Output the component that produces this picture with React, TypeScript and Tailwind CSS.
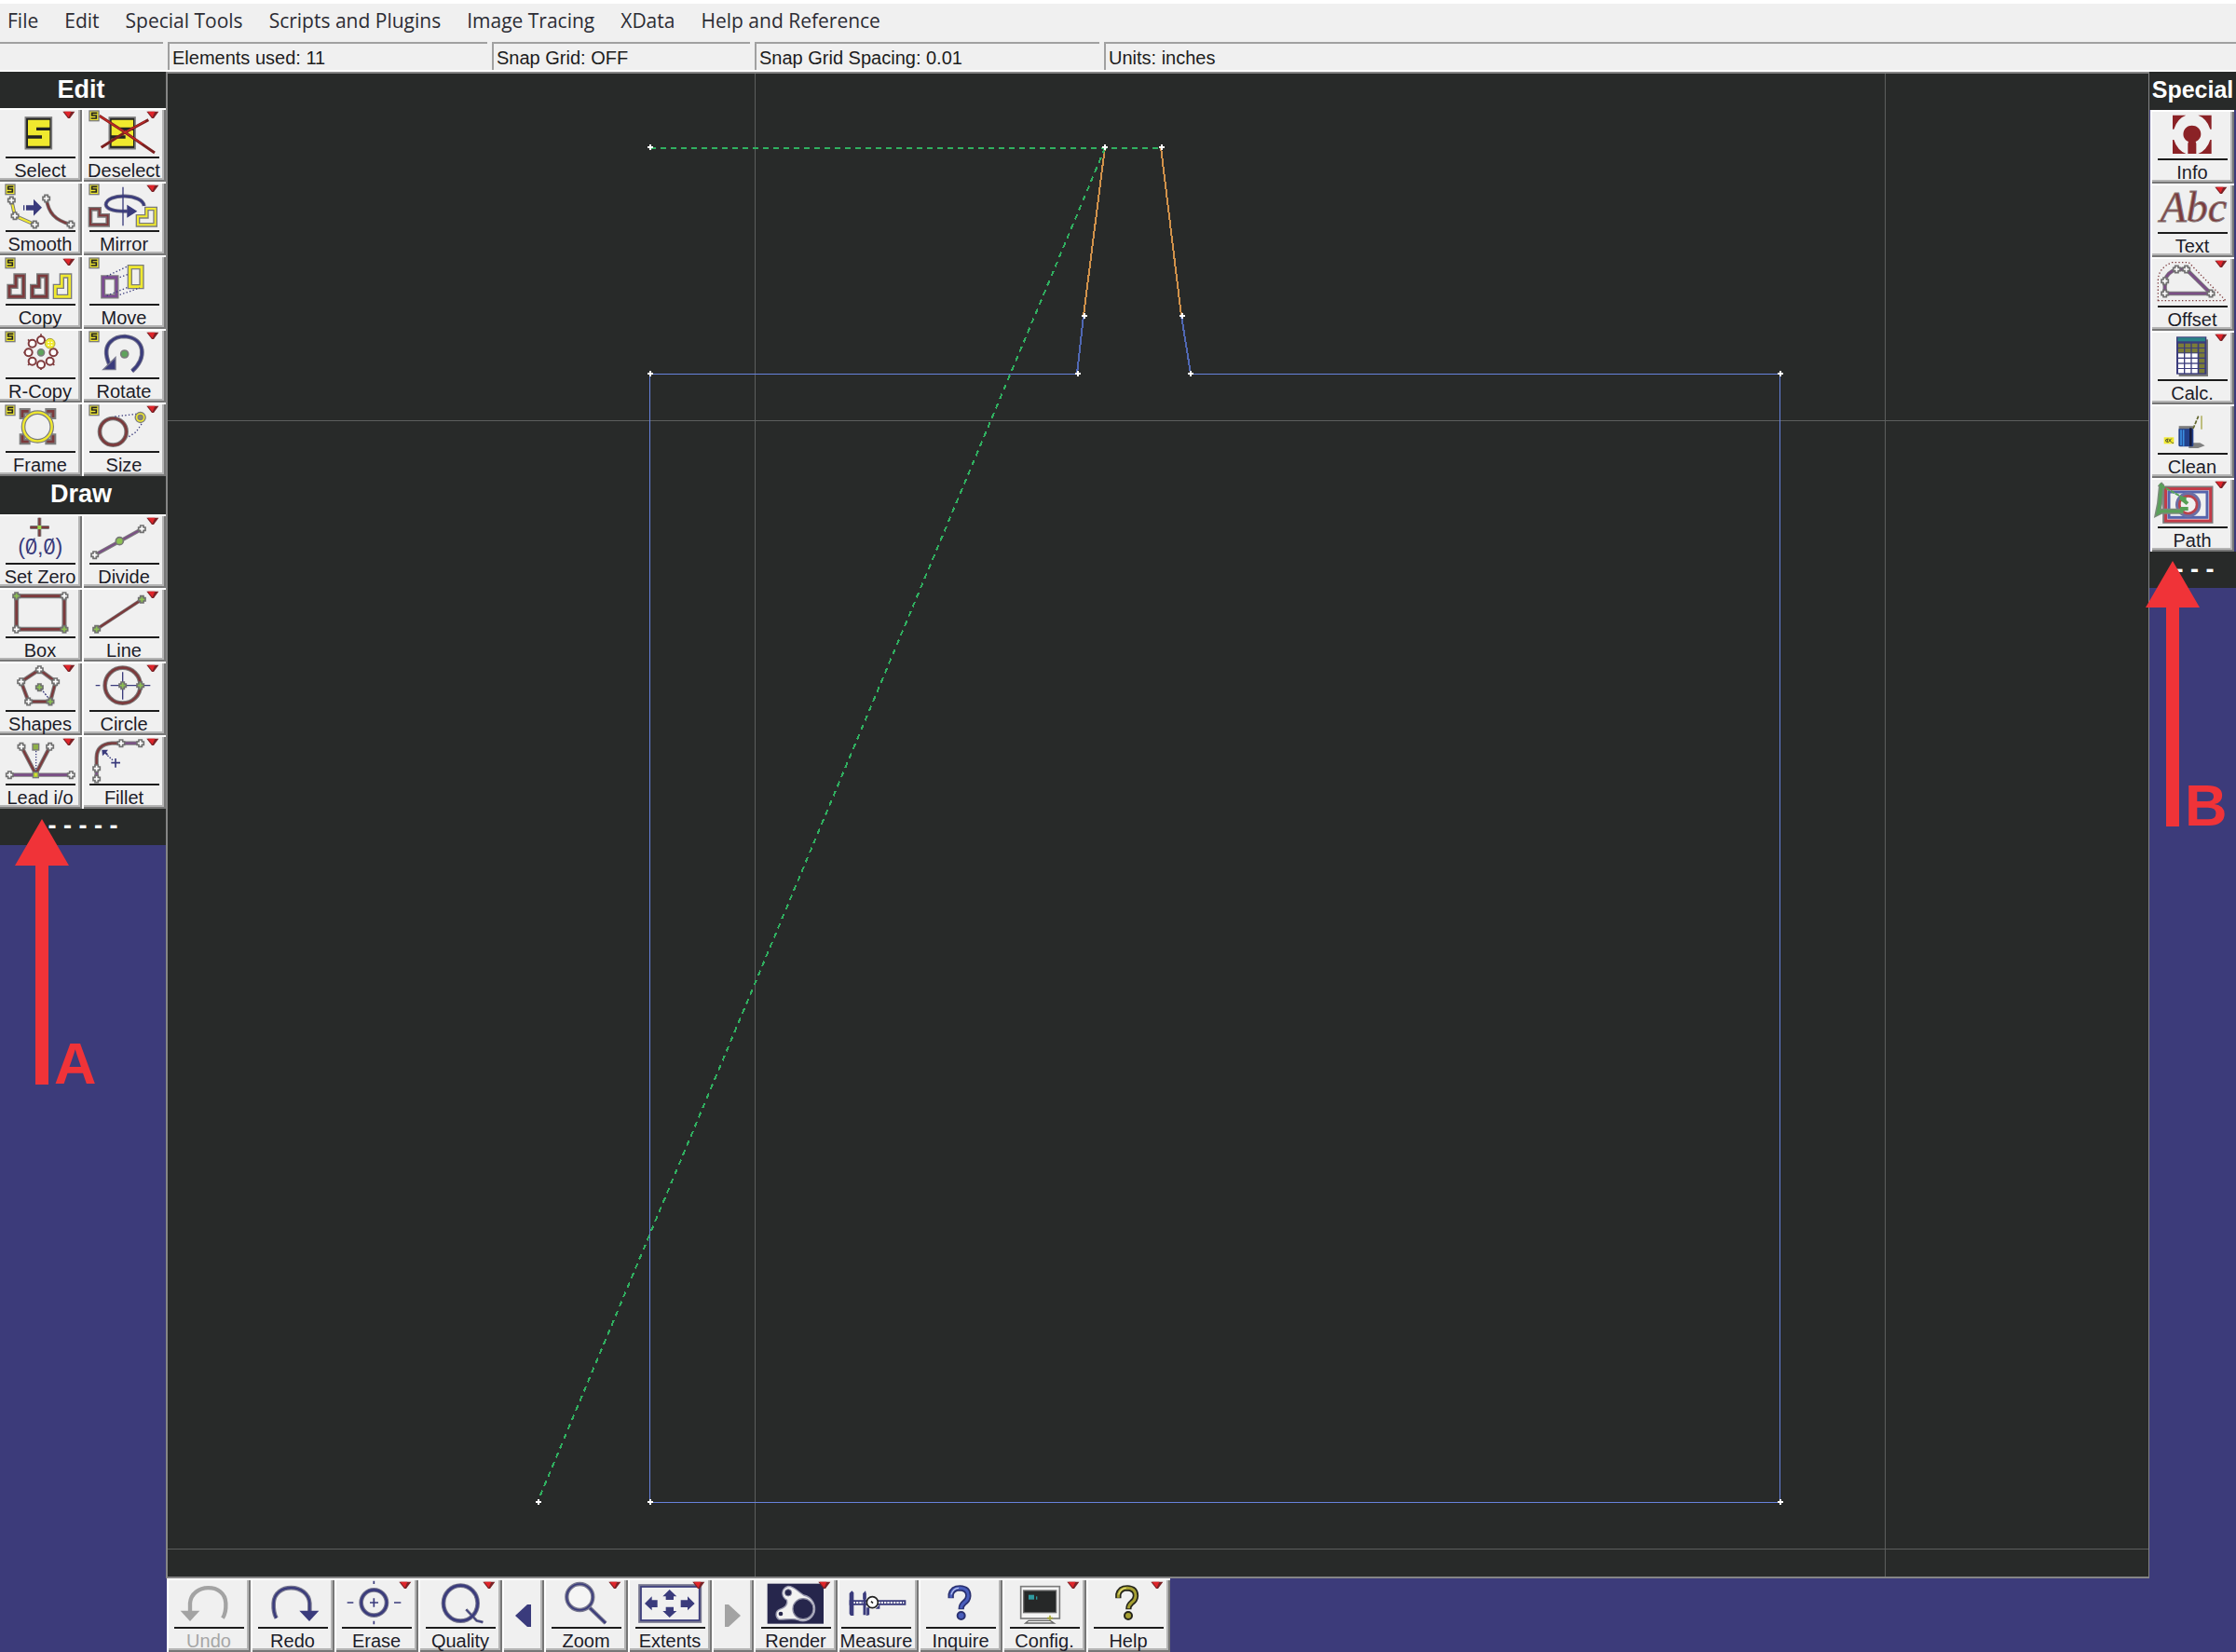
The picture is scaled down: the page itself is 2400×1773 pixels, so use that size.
import React from "react";

const GRAY = "#7c7c7c";
const MAROON = "#7c3a3c";
const NAVY = "#3a3b7c";
const YELLOW = "#f0e92e";
const GREEN = "#8cc152";
const PURPLE = "#7b4f86";

type OutlinedProps = { d: string; color: string; outer?: number; inner?: number; edge?: string };

function Outlined({ d, color, outer = 12, inner = 6, edge = GRAY }: OutlinedProps) {
  return (
    <>
      <path d={d} fill="none" stroke={edge} strokeWidth={outer} />
      <path d={d} fill="none" stroke={color} strokeWidth={inner} />
    </>
  );
}

function Node({ x, y, fill = "#ffffff" }: { x: number; y: number; fill?: string }) {
  return (
    <path
      d={`M${x - 5} ${y - 11}h10v6h6v10h-6v6h-10v-6h-6v-10h6z`}
      fill={fill}
      stroke="#707070"
      strokeWidth={5}
    />
  );
}

function Ring({ x, y }: { x: number; y: number }) {
  return <circle cx={x} cy={y} r={12} fill="#ffffff" stroke="#813c3e" strokeWidth={6} />;
}

const icons: Record<string, { box: string; art: React.ReactNode }> = {
  select: {
    box: "-6 125 270 156",
    art: (
      <>
        <rect x={82} y={155} width={84} height={101} fill="#222222" stroke={GRAY} strokeWidth={5} />
        <path d="M90 163H160V187H117V197H160V247H90V223H135V213H90Z" fill={YELLOW} />
      </>
    ),
  },
  deselect: {
    box: "266 125 270 156",
    art: (
      <>
        <rect x={354} y={155} width={83} height={101} fill="#222222" stroke={GRAY} strokeWidth={5} />
        <path d="M361 163H431V187H388V197H431V247H361V223H406V213H361Z" fill={YELLOW} />
        <path d="M322 150L400 200L500 269M480 163L400 206L328 252" stroke="#7c2020" strokeWidth={9} fill="none" />
        <path d="M322 150L400 200L460 240M470 167L400 206" stroke="#c62a26" strokeWidth={4} fill="none" />
      </>
    ),
  },
  smooth: {
    box: "-6 360 270 156",
    art: (
      <>
        <Outlined d="M37 420L48 470L112 498" color={YELLOW} outer={12} inner={6} />
        <Node x={37} y={420} />
        <Node x={48} y={470} />
        <Node x={112} y={498} />
        <path d="M75 436h4v16h-4zM84 436h24v-20l27 27-27 27v-18H84z" fill={NAVY} />
        <Outlined d="M149 414C156 460 176 484 228 498" color={MAROON} outer={12} inner={7} />
        <Node x={149} y={414} />
        <Node x={228} y={498} />
      </>
    ),
  },
  mirror: {
    box: "266 360 270 156",
    art: (
      <>
        <Outlined d="M293 448H322V469H349V499H293Z" color={MAROON} outer={14} inner={6} />
        <Outlined d="M502 447H474V472H446V499H502Z" color={YELLOW} outer={14} inner={6} />
        <path d="M466 438C462 398 345 396 343 434C345 448 370 456 412 455" fill="none" stroke="#6f6f8a" strokeWidth={12} />
        <path d="M466 438C462 398 345 396 343 434C345 448 370 456 412 455" fill="none" stroke={NAVY} strokeWidth={7} />
        <path d="M398 377V502" stroke={NAVY} strokeWidth={4} />
        <path d="M411 434L444 455L411 476Z" fill={NAVY} />
      </>
    ),
  },
  copy: {
    box: "-6 597 270 156",
    art: (
      <>
        <Outlined d="M30 697H51V663H76V730H30Z" color={MAROON} outer={16} inner={8} />
        <Outlined d="M104 697H125V663H150V730H104Z" color={MAROON} outer={16} inner={8} />
        <Outlined d="M178 697H199V663H224V730H178Z" color={YELLOW} outer={16} inner={8} />
      </>
    ),
  },
  move: {
    box: "266 597 270 156",
    art: (
      <>
        <Outlined d="M334 668H377V729H334Z" color="#7d4b92" outer={15} inner={8} />
        <Outlined d="M420 635H458V698H420Z" color={YELLOW} outer={16} inner={8} />
        <path d="M346 664L414 632M388 668L414 658M346 727L414 700M388 724L452 702" stroke={NAVY} strokeWidth={4} strokeDasharray="4 7" />
      </>
    ),
  },
  rcopy: {
    box: "-6 130 270 156",
    art: (
      <>
        <path d="M132 146v8M84 206h-8M188 206h-8M132 262v-8M90 164l6 6M90 247l6-6M175 247l-6-6" stroke={MAROON} strokeWidth={5} />
        <Ring x={132} y={166} />
        <Ring x={104} y={177} />
        <Ring x={92} y={206} />
        <Ring x={104} y={234} />
        <Ring x={132} y={245} />
        <Ring x={161} y={234} />
        <Ring x={172} y={206} />
        <circle cx={161} cy={177} r={16} fill={YELLOW} stroke="#a8a23c" strokeWidth={3} />
        <path d="M154 171h5v4h-5zM164 171h5v4h-5zM154 180h5v4h-5zM164 180h5v4h-5z" fill="#ffffff" />
        <circle cx={132} cy={206} r={11} fill="#5fa35c" stroke={GRAY} strokeWidth={4} />
      </>
    ),
  },
  rotate: {
    box: "266 130 270 156",
    art: (
      <>
        <path d="M354 244C322 170 380 154 404 154C470 160 476 226 427 266" fill="none" stroke="#74748c" strokeWidth={14} />
        <path d="M354 244C322 170 380 154 404 154C470 160 476 226 427 266" fill="none" stroke={NAVY} strokeWidth={8} />
        <path d="M334 261L374 222V261Z" fill={NAVY} stroke="#74748c" strokeWidth={4} />
        <circle cx={403} cy={211} r={12} fill="#5fa35c" stroke={GRAY} strokeWidth={5} />
      </>
    ),
  },
  frame: {
    box: "-6 365 270 156",
    art: (
      <>
        <path d="M65 386h30v14H79v16H65zM178 386h-30v14h16v16h14zM65 498h30v-14H79v-16H65zM178 498h-30v-14h16v-16h14z" fill={MAROON} stroke={GRAY} strokeWidth={6} />
        <circle cx={121} cy={443} r={46} fill="#f0f0f0" stroke={GRAY} strokeWidth={14} />
        <circle cx={121} cy={443} r={46} fill="none" stroke={YELLOW} strokeWidth={7} />
      </>
    ),
  },
  size: {
    box: "266 365 270 156",
    art: (
      <>
        <circle cx={366} cy={459} r={43} fill="none" stroke={GRAY} strokeWidth={14} />
        <circle cx={366} cy={459} r={43} fill="none" stroke={MAROON} strokeWidth={8} />
        <path d="M372 410L442 402M458 434L440 460L412 478" fill="none" stroke={NAVY} strokeWidth={4} strokeDasharray="4 7" />
        <circle cx={454} cy={413} r={12} fill="#8a8a70" stroke={GRAY} strokeWidth={13} />
        <circle cx={454} cy={413} r={12} fill="none" stroke={YELLOW} strokeWidth={5} />
      </>
    ),
  },
  zero: {
    box: "-6 23 270 156",
    art: (
      <>
        <Outlined d="M97 65H158M127 34V94" color={MAROON} outer={12} inner={6} />
        <path d="M121 59h12v12h-12z" fill="#9bd84a" />
        <text x={130} y={151} textAnchor="middle" fontSize={70} fontFamily="Liberation Sans, sans-serif" fill={NAVY}>
          (0,0)
        </text>
        <path d="M88 148L112 100M148 148L172 100" stroke={NAVY} strokeWidth={4} />
      </>
    ),
  },
  divide: {
    box: "266 23 270 156",
    art: (
      <>
        <Outlined d="M307 154L459 70" color={PURPLE} />
        <Node x={307} y={154} />
        <Node x={459} y={70} />
        <circle cx={387} cy={109} r={12} fill={GREEN} stroke="#777777" strokeWidth={5} />
      </>
    ),
  },
  box: {
    box: "-6 258 270 156",
    art: (
      <>
        <Outlined d="M53 284H207V391H53Z" color={MAROON} outer={15} inner={8} />
        <Node x={53} y={284} fill={GREEN} />
        <Node x={207} y={284} />
        <Node x={53} y={391} />
        <Node x={207} y={391} fill={GREEN} />
      </>
    ),
  },
  line: {
    box: "266 258 270 156",
    art: (
      <>
        <Outlined d="M313 391L459 295" color={MAROON} outer={11} inner={7} />
        <Node x={313} y={391} fill={GREEN} />
        <Node x={459} y={295} fill={GREEN} />
      </>
    ),
  },
  shapes: {
    box: "-6 494 270 156",
    art: (
      <>
        <Outlined d="M127 520L179 559L162 623H92L68 559Z" color={MAROON} outer={13} inner={7} />
        <Node x={127} y={520} />
        <Node x={179} y={559} />
        <Node x={92} y={623} />
        <Node x={68} y={559} />
        <path d="M132 582L160 616" stroke={NAVY} strokeWidth={4} strokeDasharray="6 4" />
        <Node x={162} y={623} fill={GREEN} />
        <Node x={127} y={577} fill={GREEN} />
      </>
    ),
  },
  circle: {
    box: "266 494 270 156",
    art: (
      <>
        <circle cx={397} cy={571} r={57} fill="none" stroke={GRAY} strokeWidth={14} />
        <circle cx={397} cy={571} r={57} fill="none" stroke={MAROON} strokeWidth={8} />
        <path d="M310 571h14M358 571h28M410 571h34M466 571h20M397 528v32M397 584v32" stroke={NAVY} strokeWidth={4} />
        <Node x={397} y={571} fill={GREEN} />
        <Node x={454} y={571} fill={GREEN} />
      </>
    ),
  },
  lead: {
    box: "-6 25 270 156",
    art: (
      <>
        <Outlined d="M69 62L115 150L161 62" color={MAROON} outer={13} inner={7} />
        <Outlined d="M31 153H229" color={PURPLE} outer={13} inner={8} />
        <path d="M116 76V146" stroke={NAVY} strokeWidth={4} strokeDasharray="4 5" />
        <Node x={69} y={62} />
        <Node x={161} y={62} />
        <Node x={31} y={153} />
        <Node x={229} y={153} />
        <rect x={105} y={53} width={20} height={20} fill="#8fb048" stroke="#777777" strokeWidth={4} />
        <rect x={106} y={144} width={18} height={18} fill="#a8c83c" stroke="#777777" strokeWidth={4} />
        <path d="M113 148h5v8h-5z" fill={YELLOW} />
      </>
    ),
  },
  fillet: {
    box: "266 25 270 156",
    art: (
      <>
        <Outlined d="M392 51H362Q313 55 313 98V132" color={MAROON} outer={13} inner={7} />
        <Outlined d="M392 51H454M313 132V166" color={PURPLE} outer={13} inner={7} />
        <Node x={392} y={51} />
        <Node x={454} y={51} />
        <Node x={313} y={132} />
        <Node x={313} y={166} />
        <path d="M330 72h20l-6 8 6 6-4 4-6-6-8 8z" fill={NAVY} />
        <path d="M348 90L368 108" stroke={NAVY} strokeWidth={4} strokeDasharray="5 4" />
        <path d="M360 114H389M374 100V129" stroke={NAVY} strokeWidth={5} />
      </>
    ),
  },
  info: {
    box: "54 175 270 156",
    art: (
      <>
        <path d="M126 192h43q-12 4-23 16t-16 29h-4zM251 192h-43q12 4 23 16t16 29h4zM126 316h43q-12-4-23-16t-16-29h-4zM251 316h-43q12-4 23-16t16-29h4z" fill="#8b2226" />
        <path d="M175 316V283L177 277C150 266 158 225 188 225C220 225 228 266 200 277L202 283V316Z" fill="#8b2226" />
      </>
    ),
  },
  text: {
    box: "54 411 270 156",
    art: (
      <text x={86} y={535} fontSize={138} fontStyle="italic" fontFamily="Liberation Serif, serif" fill={MAROON} stroke="#8a7a7a" strokeWidth={3}>
        Abc
      </text>
    ),
  },
  offset: {
    box: "54 647 270 156",
    art: (
      <>
        <path d="M79 787H297L178 664H124Q79 682 79 724Z" fill="none" stroke={MAROON} strokeWidth={4} strokeDasharray="4 7" />
        <Outlined d="M101 764V724Q106 696 139 686H170L249 764Z" color={PURPLE} outer={13} inner={8} />
        <Node x={101} y={764} />
        <Node x={101} y={724} />
        <Node x={139} y={686} />
        <Node x={170} y={686} />
        <Node x={249} y={764} />
      </>
    ),
  },
  calc: {
    box: "54 14 270 156",
    art: (
      <>
        <rect x={146} y={42} width={94} height={119} fill="#777777" />
        <rect x={138} y={33} width={97} height={121} fill={NAVY} />
        <rect x={142} y={36} width={89} height={12} fill="#2a8287" />
        {[55, 71, 87, 104, 121, 137].map((y, row) =>
          [144, 166, 188, 211].map((x, col) => (
            <rect key={`${x}-${y}`} x={x} y={y} width={18} height={13} fill={row < 2 || col === 3 ? "#7b7d38" : "#ffffff"} />
          )),
        )}
      </>
    ),
  },
  clean: {
    box: "54 250 270 156",
    art: (
      <>
        <path d="M178 374H214L230 383L208 391H178Z" fill="#808080" />
        <rect x={145} y={326} width={48} height={60} rx={5} fill="#22418c" />
        <path d="M153 332V382M161 332V384" stroke="#3b8fe0" strokeWidth={5} />
        <path d="M146 324h46" stroke={GRAY} strokeWidth={9} />
        <path d="M184 326V384" stroke="#151a3c" strokeWidth={8} />
        <path d="M192 328L209 288" stroke="#62662c" strokeWidth={5} strokeDasharray="12 4" />
        <path d="M219 287V330" stroke="#a5a545" strokeWidth={4} />
        <rect x={98} y={356} width={32} height={21} fill={YELLOW} />
        <path d="M102 366l7-5v11zM112 360l10 12M122 360l-10 12M124 374h5" stroke="#555533" strokeWidth={3} fill="none" />
      </>
    ),
  },
  path: {
    box: "54 487 270 156",
    art: (
      <>
        <rect x={99} y={518} width={152} height={110} fill="#f0f0f0" stroke={GRAY} strokeWidth={11} />
        <rect x={104} y={522} width={144} height={103} fill="none" stroke="#c43b48" strokeWidth={9} />
        <rect x={114} y={532} width={123} height={82} fill="none" stroke="#5564ac" strokeWidth={9} />
        <circle cx={176} cy={573} r={35} fill="none" stroke="#6b6fa5" strokeWidth={12} />
        <circle cx={176} cy={573} r={28} fill="#f0f0f0" stroke="#b9434c" strokeWidth={8} />
        <path d="M84 506L90 512L84 570L78 600L90 594H160" fill="none" stroke="#7a8a7a" strokeWidth={18} />
        <path d="M84 506L90 512L84 570L78 600L90 594H160" fill="none" stroke="#5aa05a" strokeWidth={9} />
        <path d="M90 512L162 552" stroke="#57a557" strokeWidth={6} strokeDasharray="14 3" />
        <path d="M148 548h22v10l8 8-8 8-22-18zM150 580h26v12h-26z" fill="#55a055" />
      </>
    ),
  },
  undo: {
    box: "26 70 270 156",
    art: (
      <>
        <path d="M101 180V150C105 86 214 82 216 150C217 170 214 186 206 198" fill="none" stroke="#a3a3a3" strokeWidth={13} />
        <path d="M70 174H132L101 208Z" fill="#a3a3a3" />
      </>
    ),
  },
  redo: {
    box: "296 70 270 156",
    art: (
      <>
        <path d="M486 180V150C482 86 372 82 370 150C369 170 372 186 379 198" fill="none" stroke="#77778f" strokeWidth={14} />
        <path d="M486 180V150C482 86 372 82 370 150C369 170 372 186 379 198" fill="none" stroke={NAVY} strokeWidth={7} />
        <path d="M453 174H516L485 208Z" fill={NAVY} />
      </>
    ),
  },
  erase: {
    box: "566 70 270 156",
    art: (
      <>
        <circle cx={693} cy={148} r={41} fill="none" stroke="#77778f" strokeWidth={14} />
        <circle cx={693} cy={148} r={41} fill="none" stroke={NAVY} strokeWidth={8} />
        <path d="M607 148h20M758 148h22M693 78v10M693 207v11M680 148h27M693 134v28" stroke={NAVY} strokeWidth={5} />
      </>
    ),
  },
  quality: {
    box: "836 70 270 156",
    art: (
      <>
        <path d="M990 170L1024 206L1044 211" fill="none" stroke="#77778f" strokeWidth={9} />
        <ellipse cx={972} cy={150} rx={55} ry={57} fill="none" stroke="#77778f" strokeWidth={14} />
        <ellipse cx={972} cy={150} rx={55} ry={57} fill="none" stroke={NAVY} strokeWidth={8} />
        <path d="M990 170L1024 206L1044 211" fill="none" stroke={NAVY} strokeWidth={4} />
      </>
    ),
  },
  zoom: {
    box: "12 70 270 156",
    art: (
      <>
        <path d="M156 162L210 214" stroke="#77778f" strokeWidth={13} />
        <path d="M156 162L210 214" stroke={NAVY} strokeWidth={6} />
        <circle cx={127} cy={130} r={42} fill="#f5f5f5" stroke="#77778f" strokeWidth={13} />
        <circle cx={127} cy={130} r={42} fill="none" stroke={NAVY} strokeWidth={5} />
      </>
    ),
  },
  extents: {
    box: "283 70 270 156",
    art: (
      <>
        <rect x={321} y={93} width={195} height={116} fill="#f0f0f0" stroke="#77778f" strokeWidth={9} />
        <rect x={325} y={97} width={188} height={108} fill="none" stroke={NAVY} strokeWidth={5} />
        <path d="M337 151L360 128V140H378V163H360V173ZM498 151L475 128V140H453V163H475V173ZM417 106L440 128H430V139H405V128H395ZM417 196L440 175H430V162H405V175H395Z" fill={NAVY} />
      </>
    ),
  },
  render: {
    box: "689 70 270 156",
    art: (
      <>
        <rect x={733} y={87} width={181} height={129} fill="#26264c" />
        <path d="M800 95C820 95 828 112 850 124C880 130 890 160 884 180C874 206 850 212 832 204C814 196 790 204 770 202C758 194 758 176 772 170C790 164 800 156 796 140C778 130 774 104 800 95Z" fill="#f2f2f2" stroke="#9a9ab0" strokeWidth={4} />
        <circle cx={848} cy={168} r={33} fill="#26264c" stroke="#8a8aa0" strokeWidth={4} />
        <circle cx={800} cy={116} r={11} fill="#26264c" stroke="#8a8aa0" strokeWidth={3} />
        <circle cx={776} cy={184} r={7} fill="#26264c" />
      </>
    ),
  },
  measure: {
    box: "17 70 270 156",
    art: (
      <>
        <path d="M64 140H246V156H64Z" fill={NAVY} />
        <path d="M76 148H240" stroke="#f0f0f0" strokeWidth={6} strokeDasharray="7 3" />
        <path d="M64 118l8-8 6 6v74h-10l-4-6zM108 118l8-8 2 8v72h6l-2-4 4-14v16h-8V136h-10z" fill={NAVY} />
        <path d="M113 118V188M124 164V188" stroke={NAVY} strokeWidth={9} />
        <path d="M148 168h14v-14" fill={NAVY} />
        <circle cx={138} cy={147} r={18} fill="#ffffff" stroke="#222222" strokeWidth={5} />
        <path d="M134 144l6 6" stroke="#222222" strokeWidth={5} />
      </>
    ),
  },
  inquire: {
    box: "287 70 270 156",
    art: (
      <>
        <path d="M391 134V122Q396 101 420 101Q447 102 447 126Q446 140 434 148Q424 156 424 170" fill="none" stroke="#2a3170" strokeWidth={19} />
        <path d="M391 132V122Q396 101 420 101Q447 102 447 126Q446 140 434 148Q424 156 424 167" fill="none" stroke="#4a5ebc" strokeWidth={9} />
        <path d="M392 122Q398 102 416 101" fill="none" stroke="#b9c4f0" strokeWidth={4} />
        <circle cx={424} cy={190} r={12} fill="#4a5ebc" stroke="#2a3170" strokeWidth={6} />
      </>
    ),
  },
  config: {
    box: "558 70 270 156",
    art: (
      <>
        <path d="M642 206H712L724 214H632Z" fill="#f5f5f5" stroke="#666666" strokeWidth={4} />
        <rect x={617} y={96} width={125} height={103} fill="#f5f5f5" stroke={GRAY} strokeWidth={5} />
        <rect x={626} y={109} width={105} height={71} fill="#262828" stroke="#6d6d6d" strokeWidth={4} />
        <rect x={642} y={123} width={18} height={15} fill="#2f9aa0" />
        <rect x={666} y={128} width={4} height={10} fill="#2f9aa0" />
        <path d="M702 198H720M711 189V205" stroke="#a8a83c" strokeWidth={5} />
      </>
    ),
  },
  help: {
    box: "829 70 270 156",
    art: (
      <>
        <path d="M932 134V122Q937 101 961 101Q988 102 988 126Q987 140 975 148Q965 156 965 170" fill="none" stroke="#26261c" strokeWidth={19} />
        <path d="M932 132V122Q937 101 961 101Q988 102 988 126Q987 140 975 148Q965 156 965 167" fill="none" stroke="#a6a032" strokeWidth={9} />
        <path d="M933 122Q939 102 957 101" fill="none" stroke="#e8e27a" strokeWidth={4} />
        <circle cx={964} cy={190} r={12} fill="#a6a032" stroke="#26261c" strokeWidth={6} />
      </>
    ),
  },
};

type Tool = { icon: string; label: string; menu?: boolean; badge?: boolean; disabled?: boolean; narrow?: boolean };

const editTools: Tool[] = [
  { icon: "select", label: "Select", menu: true },
  { icon: "deselect", label: "Deselect", menu: true, badge: true },
  { icon: "smooth", label: "Smooth", badge: true },
  { icon: "mirror", label: "Mirror", menu: true, badge: true },
  { icon: "copy", label: "Copy", menu: true, badge: true },
  { icon: "move", label: "Move", badge: true },
  { icon: "rcopy", label: "R-Copy", badge: true },
  { icon: "rotate", label: "Rotate", menu: true, badge: true },
  { icon: "frame", label: "Frame", badge: true },
  { icon: "size", label: "Size", menu: true, badge: true },
];

const drawTools: Tool[] = [
  { icon: "zero", label: "Set Zero" },
  { icon: "divide", label: "Divide", menu: true },
  { icon: "box", label: "Box" },
  { icon: "line", label: "Line", menu: true },
  { icon: "shapes", label: "Shapes", menu: true },
  { icon: "circle", label: "Circle", menu: true },
  { icon: "lead", label: "Lead i/o", menu: true },
  { icon: "fillet", label: "Fillet", menu: true },
];

const specialTools: Tool[] = [
  { icon: "info", label: "Info" },
  { icon: "text", label: "Text", menu: true },
  { icon: "offset", label: "Offset", menu: true },
  { icon: "calc", label: "Calc.", menu: true },
  { icon: "clean", label: "Clean" },
  { icon: "path", label: "Path", menu: true },
];

const historyTools: Tool[] = [
  { icon: "undo", label: "Undo", disabled: true },
  { icon: "redo", label: "Redo" },
  { icon: "erase", label: "Erase", menu: true },
  { icon: "quality", label: "Quality", menu: true },
];

const viewTools: Tool[] = [
  { icon: "zoom", label: "Zoom", menu: true },
  { icon: "extents", label: "Extents", menu: true },
];

const otherTools: Tool[] = [
  { icon: "render", label: "Render", menu: true },
  { icon: "measure", label: "Measure", narrow: true },
  { icon: "inquire", label: "Inquire" },
  { icon: "config", label: "Config.", menu: true },
  { icon: "help", label: "Help", menu: true },
];

const bevel =
  "bg-[#f0f0f0] shadow-[inset_2px_2px_0_#ffffff,inset_-2px_-2px_0_#777777,inset_-4px_-4px_0_#b4b4b4]";

function ToolButton({ tool }: { tool: Tool }) {
  const { box, art } = icons[tool.icon];
  return (
    <button
      type="button"
      disabled={tool.disabled}
      className={`flex h-[79px] shrink-0 flex-col items-center overflow-hidden ${tool.narrow ? "w-[87px] pr-1" : "w-[90px]"} ${bevel}`}
    >
      <svg className="h-[52px] w-[90px] shrink-0" viewBox={box} aria-hidden="true">
        {art}
        <svg x={box.split(" ")[0]} y={box.split(" ")[1]} width={270} height={156} viewBox="0 0 270 156">
          {tool.badge && (
            <>
              <rect x={24} y={9} width={30} height={32} fill={YELLOW} stroke={GRAY} strokeWidth={4} />
              <path d="M49 16H32V24H46V33H29" fill="none" stroke="#222222" strokeWidth={5} />
            </>
          )}
          {tool.menu && (
            <>
              <path d="M208 11H247L231 33H225Z" fill="#7b2226" />
              <path d="M212 11H235L227 30Z" fill="#e0242a" />
            </>
          )}
        </svg>
      </svg>
      <span className="h-[2px] w-[75px] shrink-0 bg-[#1c1c1c]" />
      <span
        className={`text-[20px] leading-[26px] whitespace-nowrap ${tool.disabled ? "text-[#a6a6a6]" : "text-[#1c1c28]"}`}
      >
        {tool.label}
      </span>
    </button>
  );
}

function PageButton({ label, next }: { label: string; next?: boolean }) {
  return (
    <button
      type="button"
      aria-label={label}
      disabled={next}
      className={`flex h-[79px] w-[45px] shrink-0 items-center justify-center ${bevel}`}
    >
      <svg className="h-[24px] w-[17px]" viewBox="0 0 17 24" aria-hidden="true">
        {next ? <path d="M0 0H4L17 12L4 24H0Z" fill="#a3a3a3" /> : <path d="M17 0H13L0 12L13 24H17Z" fill={NAVY} />}
      </svg>
    </button>
  );
}

function Callout({ letter, className }: { letter: string; className: string }) {
  return (
    <div className={`pointer-events-none absolute flex items-end text-[#f03338] ${className}`}>
      <svg className="h-[285px] w-[58px] shrink-0" viewBox="0 0 58 285" aria-hidden="true">
        <path d="M29 0L58 50H36V285H22V50H0Z" fill="currentColor" />
      </svg>
      <span className="-mb-[9px] -ml-4 text-[63px] leading-[63px] font-bold">{letter}</span>
    </div>
  );
}

const points = [
  [697, 158],
  [1185, 158],
  [1246, 158],
  [1163, 339],
  [1268, 339],
  [1156, 401],
  [1277, 401],
  [697, 401],
  [1910, 401],
  [697, 1612],
  [1910, 1612],
  [577, 1612],
];

function Drawing() {
  return (
    <svg className="min-w-0 flex-1" shapeRendering="crispEdges" role="img" aria-label="Drawing">
      <g transform="translate(-180 -79)" fill="none">
        <path d="M180 451.5H4000M180 1662.5H4000M810.5 79V4000M2023.5 79V4000" stroke="#5c5e5d" />
        <path d="M1156 401.5H697.5V1612.5H1910.5V401.5H1278" stroke="#6682dc" />
        <path d="M1163 339L1156 401M1268 339L1278 401" stroke="#5068b4" strokeWidth={2} />
        <path d="M1186 158L1163 339M1246 158L1268 339" stroke="#d2924a" strokeWidth={2} />
        <path d="M698 159H1246M1186 159L577 1612" stroke="#30b060" strokeWidth={2} strokeDasharray="6 5" />
        {points.map(([x, y]) => (
          <path key={`${x}-${y}`} d={`M${x - 2} ${y}h6M${x + 1} ${y - 3}v6`} stroke="#ffffff" strokeWidth={2} />
        ))}
      </g>
    </svg>
  );
}

const menus = ["File", "Edit", "Special Tools", "Scripts and Plugins", "Image Tracing", "XData", "Help and Reference"];

const cell = "h-[30px] border-t-2 border-l-2 border-[#a0a0a0] pl-[3px] whitespace-nowrap";

export default function App() {
  return (
    <div className="flex min-h-screen flex-col bg-[#3c3b7a] font-['Liberation_Sans',Arial,sans-serif]">
      <header className="bg-[#f0f0f0]">
        <nav className="flex h-[45px] items-start border-t-4 border-white pt-[3px] font-['Open_Sans','Noto_Sans',sans-serif] text-[21px] leading-[30px] text-[#2c2c34]">
          {menus.map((m) => (
            <button key={m} type="button" className="px-[14px] first:pl-2">
              {m}
            </button>
          ))}
        </nav>
        <div className="flex h-[32px] gap-[5px] border-b-2 border-white text-[20px] leading-[30px] text-[#1c1c1c]">
          <div className="h-[30px] w-[175px] border-t-2 border-[#a0a0a0]" />
          <div className={`w-[343px] ${cell}`}>Elements used: 11</div>
          <div className={`w-[277px] ${cell}`}>Snap Grid: OFF</div>
          <div className={`w-[370px] ${cell}`}>Snap Grid Spacing: 0.01</div>
          <div className={`flex-1 ${cell}`}>Units: inches</div>
        </div>
      </header>

      <div className="flex flex-1">
        <aside className="relative w-[178px] shrink-0">
          <div className="overflow-hidden bg-[#282a29]">
            <h2 className="h-[39px] pr-1 text-center text-[27px] leading-[38px] font-bold text-white">Edit</h2>
            <div className="-ml-0.5 grid w-[180px] grid-cols-2">
              {editTools.map((t) => (
                <ToolButton key={t.label} tool={t} />
              ))}
            </div>
            <h2 className="h-[41px] pr-1 text-center text-[27px] leading-[38px] font-bold text-white">Draw</h2>
            <div className="-ml-0.5 grid w-[180px] grid-cols-2">
              {drawTools.map((t) => (
                <ToolButton key={t.label} tool={t} />
              ))}
            </div>
            <div className="h-[39px] text-center text-[27px] leading-[36px] font-bold text-white">- - - - -</div>
          </div>
          <Callout letter="A" className="top-[802px] left-4" />
        </aside>

        <main className="flex min-w-0 flex-1 flex-col">
          <div className="flex flex-1 border-2 border-r border-[#858585] bg-[#282a29]">
            <Drawing />
          </div>
          <div className="flex h-[79px] items-start pl-px">
            {historyTools.map((t) => (
              <ToolButton key={t.label} tool={t} />
            ))}
            <PageButton label="Previous view" />
            {viewTools.map((t) => (
              <ToolButton key={t.label} tool={t} />
            ))}
            <PageButton label="Next view" next />
            {otherTools.map((t) => (
              <ToolButton key={t.label} tool={t} />
            ))}
          </div>
        </main>

        <aside className="relative w-[93px] shrink-0">
          <div className="bg-[#282a29]">
            <h2 className="h-[41px] text-center text-[25px] leading-[38px] font-bold text-white">Special</h2>
            <div className="flex flex-col bg-[#3c3b7a] pl-px">
              {specialTools.map((t) => (
                <ToolButton key={t.label} tool={t} />
              ))}
            </div>
            <div className="h-[39px] pl-1 text-center text-[27px] leading-[38px] font-bold text-white">- - -</div>
          </div>
          <Callout letter="B" className="top-[525px] -left-1" />
        </aside>
      </div>
    </div>
  );
}
